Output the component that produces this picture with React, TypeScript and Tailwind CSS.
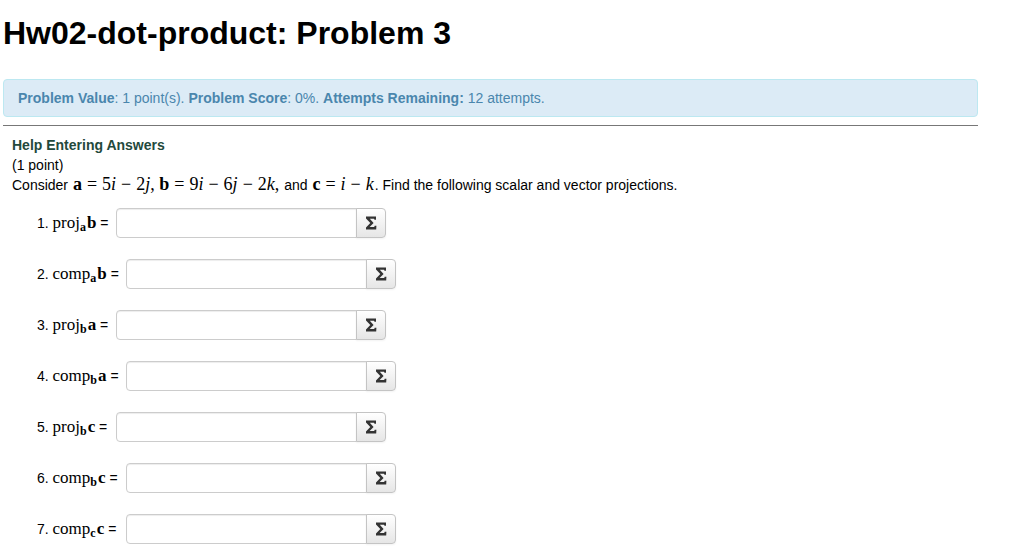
import { ReactNode } from 'react';

interface Question {
  op: 'proj' | 'comp';
  onto: string;
  vector: string;
}

const questions: Question[] = [
  { op: 'proj', onto: 'a', vector: 'b' },
  { op: 'comp', onto: 'a', vector: 'b' },
  { op: 'proj', onto: 'b', vector: 'a' },
  { op: 'comp', onto: 'b', vector: 'a' },
  { op: 'proj', onto: 'b', vector: 'c' },
  { op: 'comp', onto: 'b', vector: 'c' },
  { op: 'comp', onto: 'c', vector: 'c' },
];

function MathText({ children }: { children: ReactNode }) {
  return <span className="font-['Liberation_Serif',serif] text-[17px] leading-none">{children}</span>;
}

function Formula({ children }: { children: ReactNode }) {
  return <span className="mx-px font-['Liberation_Serif',serif] text-[18px] leading-none">{children}</span>;
}

function Equals() {
  return <span className="mx-[5px]">=</span>;
}

function Minus() {
  return <span className="mx-[5px]">−</span>;
}

function SigmaIcon() {
  return (
    <svg width="12" height="14" viewBox="0 0 12 14" fill="#333333" aria-hidden="true">
      <path d="M1 0.5H11V3.8H9.5L9 2.8H4.8L8.6 6.9L4.6 11H9.2L9.7 9.8H11.4L11.2 13.4H1V11.6L5.3 7L1 2.4Z" />
    </svg>
  );
}

function AnswerRow({ question, number }: { question: Question; number: number }) {
  const id = `answer-${number}`;
  return (
    <li className="flex h-[30px] items-center">
      <label
        htmlFor={id}
        className={`shrink-0 whitespace-nowrap ${question.op === 'proj' ? 'w-[79px]' : 'w-[89px]'}`}
      >
        {number}.{' '}
        <MathText>
          {question.op}
          <sub className="bottom-[-3px] mr-px text-[12px] font-bold">{question.onto}</sub>
          <b>{question.vector}</b>
        </MathText>{' '}
        =
      </label>
      <input
        id={id}
        type="text"
        className="h-[30px] w-[241px] rounded-l border border-[#cccccc] bg-white px-2 shadow-[inset_0_1px_1px_rgba(0,0,0,0.075)] outline-none focus:border-[#52a8ec]"
      />
      <button
        type="button"
        aria-label="Equation editor"
        className="-ml-px flex h-[30px] w-[30px] items-center justify-center rounded-r border border-[#c4c4c4] bg-linear-to-b from-white to-[#e6e6e6] shadow-[0_1px_2px_rgba(0,0,0,0.05)]"
      >
        <SigmaIcon />
      </button>
    </li>
  );
}

export default function App() {
  return (
    <div className="min-h-screen bg-white pl-[3px] pr-[46px] font-['Liberation_Sans',Arial,sans-serif] text-[14px] leading-[20px] text-black">
      <h1 className="pt-[13px] text-[32px] font-bold leading-[40px]">Hw02-dot-product: Problem 3</h1>

      <div className="mt-[26px] rounded border border-[#bce8f1] bg-[#dcebf6] px-[14px] py-[8px] text-[#4a86ad]">
        <b>Problem Value</b>: 1 point(s). <b>Problem Score</b>: 0%. <b>Attempts Remaining:</b> 12 attempts.
      </div>

      <main className="mt-[8px] border-t border-[#777777] px-[9px] pt-[9px]">
        <a href="#help" className="block font-bold text-[#23493c]">
          Help Entering Answers
        </a>
        <p>(1 point)</p>
        <p>
          Consider{' '}
          <Formula>
            <b>a</b>
            <Equals />5<i>i</i>
            <Minus />2<i>j</i>, <b>b</b>
            <Equals />9<i>i</i>
            <Minus />6<i>j</i>
            <Minus />2<i>k</i>,
          </Formula>{' '}
          and{' '}
          <Formula>
            <b>c</b>
            <Equals />
            <i>i</i>
            <Minus />
            <i>k</i>
          </Formula>
          . Find the following scalar and vector projections.
        </p>

        <ol className="ml-[25px] mt-[13px] flex flex-col gap-[21px]">
          {questions.map((question, i) => (
            <AnswerRow key={i} question={question} number={i + 1} />
          ))}
        </ol>
      </main>
    </div>
  );
}
